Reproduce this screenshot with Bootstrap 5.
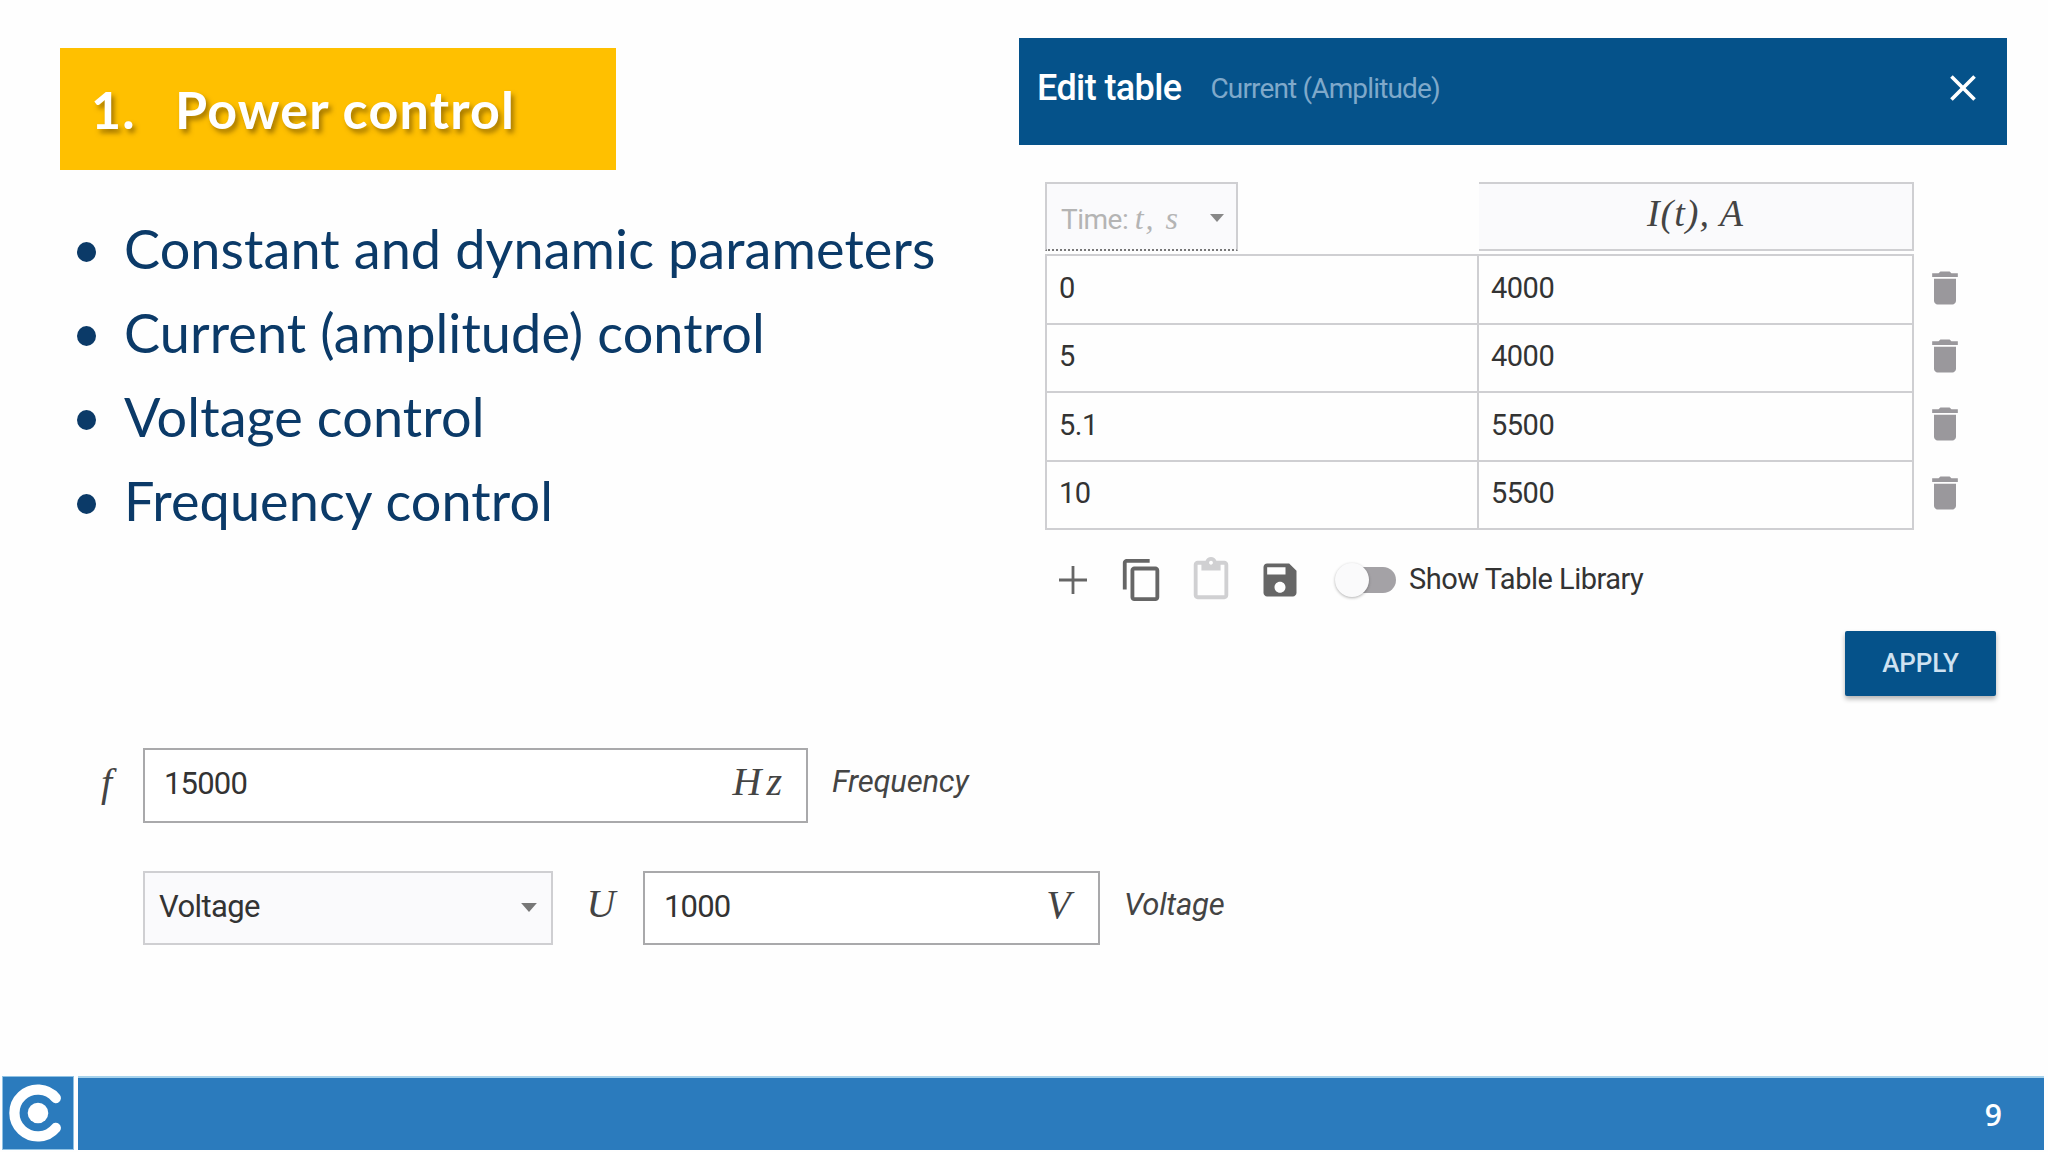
<!DOCTYPE html>
<html>
  <head>
    <title>Power control</title>
    <link href="https://cdn.jsdelivr.net/npm/bootstrap@5.3.2/dist/css/bootstrap.min.css" rel="stylesheet">
    <script src="https://cdn.jsdelivr.net/npm/bootstrap@5.3.2/dist/js/bootstrap.bundle.min.js"></script>
    <style>
      body { background: #fefefe; font-family: Roboto, sans-serif; color: #333; overflow: hidden; }
      .slide { width: 2048px; height: 1152px; }
      .top-area { height: 700px; }
      .left-col { width: 1019px; padding: 48px 0 0 60px; }
      .right-col { width: 988px; padding-top: 38px; }

      .title-box { width: 556px; height: 122px; background: #ffc000; color: #fff; font-family: Lato, sans-serif; font-weight: 700; font-size: 52px; letter-spacing: 1.2px; text-shadow: 3px 4px 5px rgba(90, 60, 0, .55); padding-left: 31px; }
      .title-num { width: 84px; }
      .bullets { margin: 37px 0 0 17px; padding: 0; color: #0b3a68; font-family: Lato, sans-serif; font-size: 54px; line-height: 84px; letter-spacing: .1px; }
      .dot { width: 19px; height: 20px; border-radius: 50%; background: #0b3a68; margin: 5px 28px 0 0; }

      .panel-head { height: 107px; background: #05528a; padding: 0 22px 8px 18px; }
      .panel-title { color: #fff; font-size: 36px; font-weight: 500; letter-spacing: -.6px; }
      .panel-sub { color: #7fa9ca; font-size: 28px; letter-spacing: -.85px; margin-left: 29px; padding-top: 2px; }

      .tbl-area { margin: 37px 0 0 26px; width: 869px; }
      .col-t { width: 434px; }
      .col-v { width: 435px; }
      .time-select { width: 193px; height: 69px; background: #fafafc; border: 2px solid #cfcfd2; border-bottom: 2px dotted #777; color: #b4b4b4; font-size: 28px; letter-spacing: -.5px; padding: 2px 12px 0 14px; }
      .time-select .math { font-size: 32px; letter-spacing: 2px; }
      .math { font-family: "Liberation Serif", serif; font-style: italic; }
      .val-head { height: 69px; background: #fafafc; border-top: 2px solid #cfcfd2; border-bottom: 2px solid #cfcfd2; border-right: 2px solid #cfcfd2; font-size: 38px; letter-spacing: 1px; color: #444; padding-bottom: 6px; }
      .head-row { height: 72px; }
      .data-tbl { width: 869px; height: 276px; border: 2px solid #cfcfd2; }
      .tbl-row { flex: 1; border-bottom: 2px solid #cfcfd2; font-size: 29px; letter-spacing: -.5px; color: #333; }
      .tbl-row:last-child { border-bottom: 0; }
      .tbl-row > div { height: 100%; padding: 0 0 2px 12px; }
      .tbl-row > .col-t { border-right: 2px solid #cfcfd2; }
      .trash-col { width: 44px; margin-left: 9px; }
      .trash-cell { height: 68.75px; margin-top: -.5px; }
      .trash-top { height: 72px; }

      .toolbar { margin: 11px 0 0 19px; height: 78px; }
      .tool-btn { width: 69px; }
      .switch-wrap { width: 60px; height: 26px; margin-left: 21px; }
      .switch-track { left: 11px; top: 0; width: 50px; height: 26px; border-radius: 13px; background: #a4a2a6; }
      .switch-thumb { left: 0; top: -4px; width: 34px; height: 34px; border-radius: 50%; background: #fafafb; box-shadow: 0 1px 3px rgba(0, 0, 0, .3); }
      .switch-label { font-size: 29px; letter-spacing: -.5px; margin-left: 14px; color: #333; }
      .apply-btn { width: 151px; height: 65px; margin: 12px 11px 0 0; background: #05528a; color: #cfe2f1; border: 0; border-radius: 2px; font-size: 26px; font-weight: 500; letter-spacing: -.1px; box-shadow: 0 3px 5px rgba(0, 0, 0, .3); }
      .apply-btn:hover { background: #05528a; color: #cfe2f1; }

      .form-area { padding-top: 48px; }
      .form-line { height: 75px; }
      .form-line + .form-line { margin-top: 48px; height: 74px; }
      .sym { font-family: "Liberation Serif", serif; font-style: italic; font-size: 40px; color: #444; padding-bottom: 5px; }
      .sym-f { width: 143px; padding-right: 31px; text-align: right; }
      .sym-hz { letter-spacing: 5px; margin-right: -5px; }
      .sym-v { margin-right: 4px; }
      .num-box { height: 100%; border: 2px solid #a9a9ab; background: #fff; font-size: 31px; letter-spacing: -.8px; padding: 0 24px 2px 19px; color: #333; }
      .num-f { width: 665px; }
      .num-u { width: 457px; }
      .sel-box { margin-left: 143px; width: 410px; height: 100%; background: #fafafc; border: 2px solid #cfcfd2; font-size: 31px; letter-spacing: -.6px; padding: 0 14px 2px 14px; color: #333; }
      .sym-u { width: 90px; text-align: center; padding: 0 0 8px 6px; }
      .note { font-style: italic; font-size: 31px; letter-spacing: -.2px; color: #444; margin-left: 24px; padding-bottom: 6px; }

      .foot-area { margin-top: auto; height: 74px; margin-bottom: 2px; }
      .logo-box { width: 72px; margin-left: 2px; background: #2b7bbd; border: 1px solid #8fc2e4; }
      .foot-bar { margin-left: 4px; margin-right: 4px; background: #2b7bbd; border-top: 2px solid #a6d2ec; color: #fff; font-family: "Open Sans", sans-serif; font-size: 30px; font-weight: 600; padding-right: 42px; }
    </style>
  </head>
  <body>
    <div class="slide d-flex flex-column">
      <div class="top-area d-flex">
        <div class="left-col">
          <div class="title-box d-flex align-items-center">
            <span class="title-num">1.</span><span>Power control</span>
          </div>
          <ul class="bullets list-unstyled">
            <li class="d-flex align-items-center"><span class="dot"></span>Constant and dynamic parameters</li>
            <li class="d-flex align-items-center"><span class="dot"></span>Current (amplitude) control</li>
            <li class="d-flex align-items-center"><span class="dot"></span>Voltage control</li>
            <li class="d-flex align-items-center"><span class="dot"></span>Frequency control</li>
          </ul>
        </div>

        <div class="right-col">
          <div class="panel-head d-flex align-items-center">
            <span class="panel-title">Edit table</span>
            <span class="panel-sub">Current (Amplitude)</span>
            <svg class="ms-auto" width="44" height="44" viewBox="0 0 24 24" fill="#fff"><path d="M19 6.41L17.59 5 12 10.59 6.41 5 5 6.41 10.59 12 5 17.59 6.41 19 12 13.41 17.59 19 19 17.59 13.41 12z"/></svg>
          </div>

          <div class="tbl-area d-flex">
            <div>
              <div class="head-row d-flex">
                <div class="col-t">
                  <div class="time-select d-flex align-items-center">
                    <span>Time: <span class="math">t, s</span></span>
                    <svg class="ms-auto" width="14" height="8" viewBox="0 0 14 8" fill="#888"><path d="M0 0h14L7 8z"/></svg>
                  </div>
                </div>
                <div class="col-v val-head d-flex align-items-center justify-content-center">
                  <span class="math">I(t), A</span>
                </div>
              </div>
              <div class="data-tbl d-flex flex-column" id="rows"></div>
            </div>
            <div class="trash-col" id="trash"><div class="trash-top"></div></div>
          </div>

          <div class="toolbar d-flex align-items-center">
            <div class="tool-btn text-center"><svg width="48" height="48" viewBox="0 0 24 24" fill="#666"><path d="M19 12.7h-6.3V19h-1.4v-6.3H5v-1.4h6.3V5h1.4v6.3H19z"/></svg></div>
            <div class="tool-btn text-center"><svg width="46" height="46" viewBox="0 0 24 24" fill="#666"><path d="M16 1H4c-1.1 0-2 .9-2 2v14h2V3h12V1zm3 4H8c-1.1 0-2 .9-2 2v14c0 1.1.9 2 2 2h11c1.1 0 2-.9 2-2V7c0-1.1-.9-2-2-2zm0 16H8V7h11v14z"/></svg></div>
            <div class="tool-btn text-center"><svg width="46" height="46" viewBox="0 0 24 24" fill="#d0d0d2"><path d="M19 2h-4.18C14.4.84 13.3 0 12 0c-1.3 0-2.4.84-2.82 2H5c-1.1 0-2 .9-2 2v16c0 1.1.9 2 2 2h14c1.1 0 2-.9 2-2V4c0-1.1-.9-2-2-2zm-7 0c.55 0 1 .45 1 1s-.45 1-1 1-1-.45-1-1 .45-1 1-1zm7 18H5V4h2v3h10V4h2v16z"/></svg></div>
            <div class="tool-btn text-center"><svg width="44" height="44" viewBox="0 0 24 24" fill="#666"><path d="M17 3H5c-1.11 0-2 .9-2 2v14c0 1.1.89 2 2 2h14c1.1 0 2-.9 2-2V7l-4-4zm-5 16c-1.66 0-3-1.34-3-3s1.34-3 3-3 3 1.34 3 3-1.34 3-3 3zm3-10H5V5h10v4z"/></svg></div>
            <div class="switch-wrap position-relative">
              <span class="switch-track position-absolute"></span>
              <span class="switch-thumb position-absolute"></span>
            </div>
            <span class="switch-label">Show Table Library</span>
          </div>

          <div class="d-flex justify-content-end">
            <button class="btn apply-btn text-uppercase p-0" type="button">Apply</button>
          </div>
        </div>
      </div>

      <div class="form-area">
        <div class="form-line d-flex align-items-center">
          <span class="sym sym-f">f</span>
          <div class="num-box num-f d-flex align-items-center"><span>15000</span><span class="sym sym-hz ms-auto">Hz</span></div>
          <span class="note">Frequency</span>
        </div>
        <div class="form-line d-flex align-items-center">
          <div class="sel-box d-flex align-items-center"><span>Voltage</span><svg class="ms-auto" width="16" height="9" viewBox="0 0 14 8" fill="#777"><path d="M0 0h14L7 8z"/></svg></div>
          <span class="sym sym-u">U</span>
          <div class="num-box num-u d-flex align-items-center"><span>1000</span><span class="sym sym-v ms-auto">V</span></div>
          <span class="note">Voltage</span>
        </div>
      </div>

      <div class="foot-area d-flex">
        <div class="logo-box d-flex align-items-center justify-content-center">
          <svg width="58" height="58" viewBox="0 0 62 62" fill="none">
            <path d="M50 15A25 25 0 1 0 50 47" stroke="#fff" stroke-width="11" stroke-linecap="round"/>
            <circle cx="31" cy="31" r="11" fill="#fff"/>
          </svg>
        </div>
        <div class="foot-bar flex-grow-1 d-flex align-items-center justify-content-end">9</div>
      </div>
    </div>

    <script>
      // table values
      const tableRows = [["0", "4000"], ["5", "4000"], ["5.1", "5500"], ["10", "5500"]];
      const trashIcon = `<svg width="44" height="44" viewBox="0 0 24 24" fill="#9a989c"><path d="M6 19c0 1.1.9 2 2 2h8c1.1 0 2-.9 2-2V7H6v12zM19 4h-3.5l-1-1h-5l-1 1H5v2h14V4z"/></svg>`;
      const rowsEl = document.getElementById('rows');
      const trashEl = document.getElementById('trash');
      for (let i = 0; i < tableRows.length; i++) {
        const row = document.createElement('div');
        row.className = 'tbl-row d-flex';
        row.innerHTML = `<div class="col-t d-flex align-items-center">${tableRows[i][0]}</div><div class="col-v d-flex align-items-center">${tableRows[i][1]}</div>`;
        rowsEl.appendChild(row);

        const cell = document.createElement('div');
        cell.className = 'trash-cell d-flex align-items-center';
        cell.innerHTML = trashIcon;
        trashEl.appendChild(cell);
      }
    </script>
  </body>
</html>
